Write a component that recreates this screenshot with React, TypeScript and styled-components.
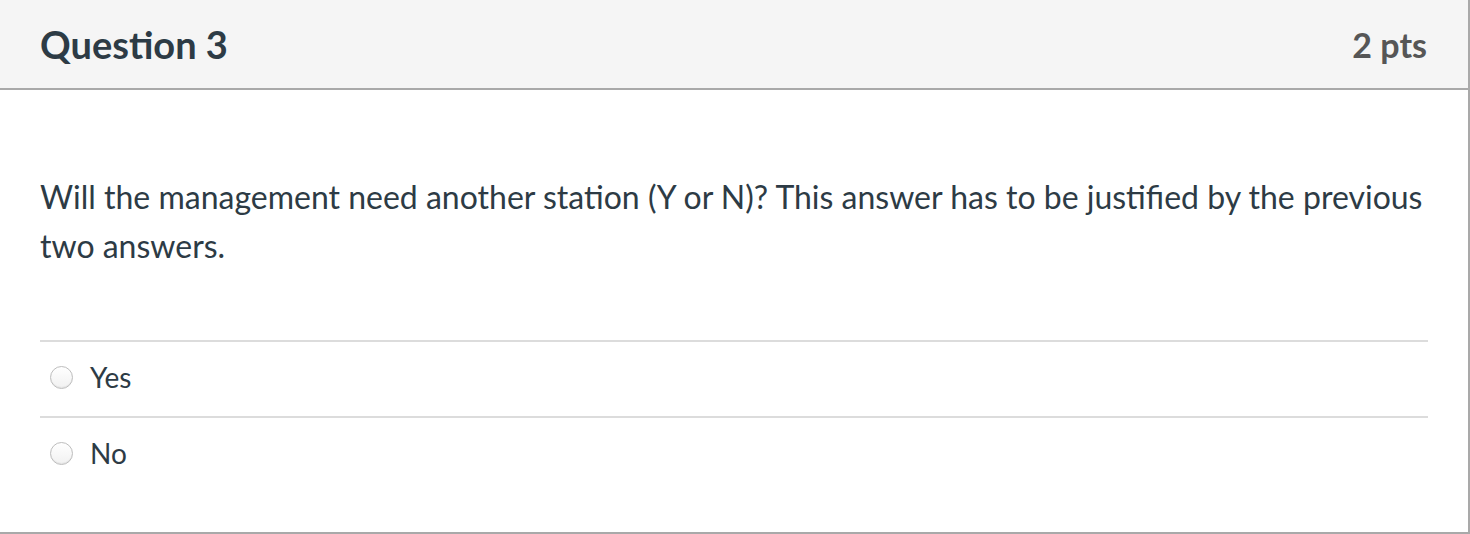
import React from "react";
import styled, { createGlobalStyle } from "styled-components";

const GlobalStyle = createGlobalStyle`
  html, body {
    margin: 0;
    padding: 0;
    background: #fff;
  }
  body {
    font-family: Lato, "Open Sans", "Liberation Sans", sans-serif;
    color: #2d3b45;
  }
`;

const answers = [
  { id: "a1", label: "Yes" },
  { id: "a2", label: "No" },
];

const App = () => {
  return (
    <>
      <GlobalStyle />
      <QuestionCard>
        <Header>
          <QuestionName>Question 3</QuestionName>
          <Points>2 pts</Points>
        </Header>
        <Content>
          <QuestionText>
            Will the management need another station (Y or N)? This answer has
            to be justified by the previous two answers.
          </QuestionText>
          <AnswerList>
            {answers.map((a) => (
              <AnswerRow key={a.id}>
                <Radio type="radio" name="question_3" id={a.id} />
                <AnswerLabel htmlFor={a.id}>{a.label}</AnswerLabel>
              </AnswerRow>
            ))}
          </AnswerList>
        </Content>
      </QuestionCard>
    </>
  );
};
export default App;

const QuestionCard = styled.div`
  box-sizing: border-box;
  width: 1470px;
  height: 534px;
  border-right: 2px solid #a9a9a9;
  border-bottom: 2px solid #a9a9a9;
  background: #fff;
`;

const Header = styled.div`
  box-sizing: border-box;
  height: 90px;
  display: flex;
  align-items: center;
  justify-content: space-between;
  padding: 0 41px 0 40px;
  background: #f5f5f5;
  border-bottom: 2px solid #a9a9a9;
`;

const QuestionName = styled.h2`
  margin: 0;
  font-size: 38px;
  font-weight: 700;
  color: #2d3b45;
`;

const Points = styled.span`
  font-size: 34px;
  font-weight: 700;
  color: #565656;
`;

const Content = styled.div`
  padding: 82px 40px 0 40px;
`;

const QuestionText = styled.p`
  margin: 0 0 70px;
  font-size: 32px;
  line-height: 49px;
  color: #2d3b45;
`;

const AnswerList = styled.div`
  display: flex;
  flex-direction: column;
`;

const AnswerRow = styled.div`
  box-sizing: border-box;
  height: 76px;
  display: flex;
  align-items: center;
  gap: 17px;
  padding: 0 0 4px 10px;
  border-top: 2px solid #dcdcdc;
`;

const Radio = styled.input`
  appearance: none;
  -webkit-appearance: none;
  box-sizing: border-box;
  margin: 0;
  width: 23px;
  height: 23px;
  border-radius: 50%;
  border: 1px solid #bdbdbd;
  background: linear-gradient(#ffffff, #f1f1f1);
  box-shadow: inset 0 -1px 1px rgba(0, 0, 0, 0.06);
  cursor: pointer;
`;

const AnswerLabel = styled.label`
  font-size: 28px;
  color: #2d3b45;
  cursor: pointer;
`;
